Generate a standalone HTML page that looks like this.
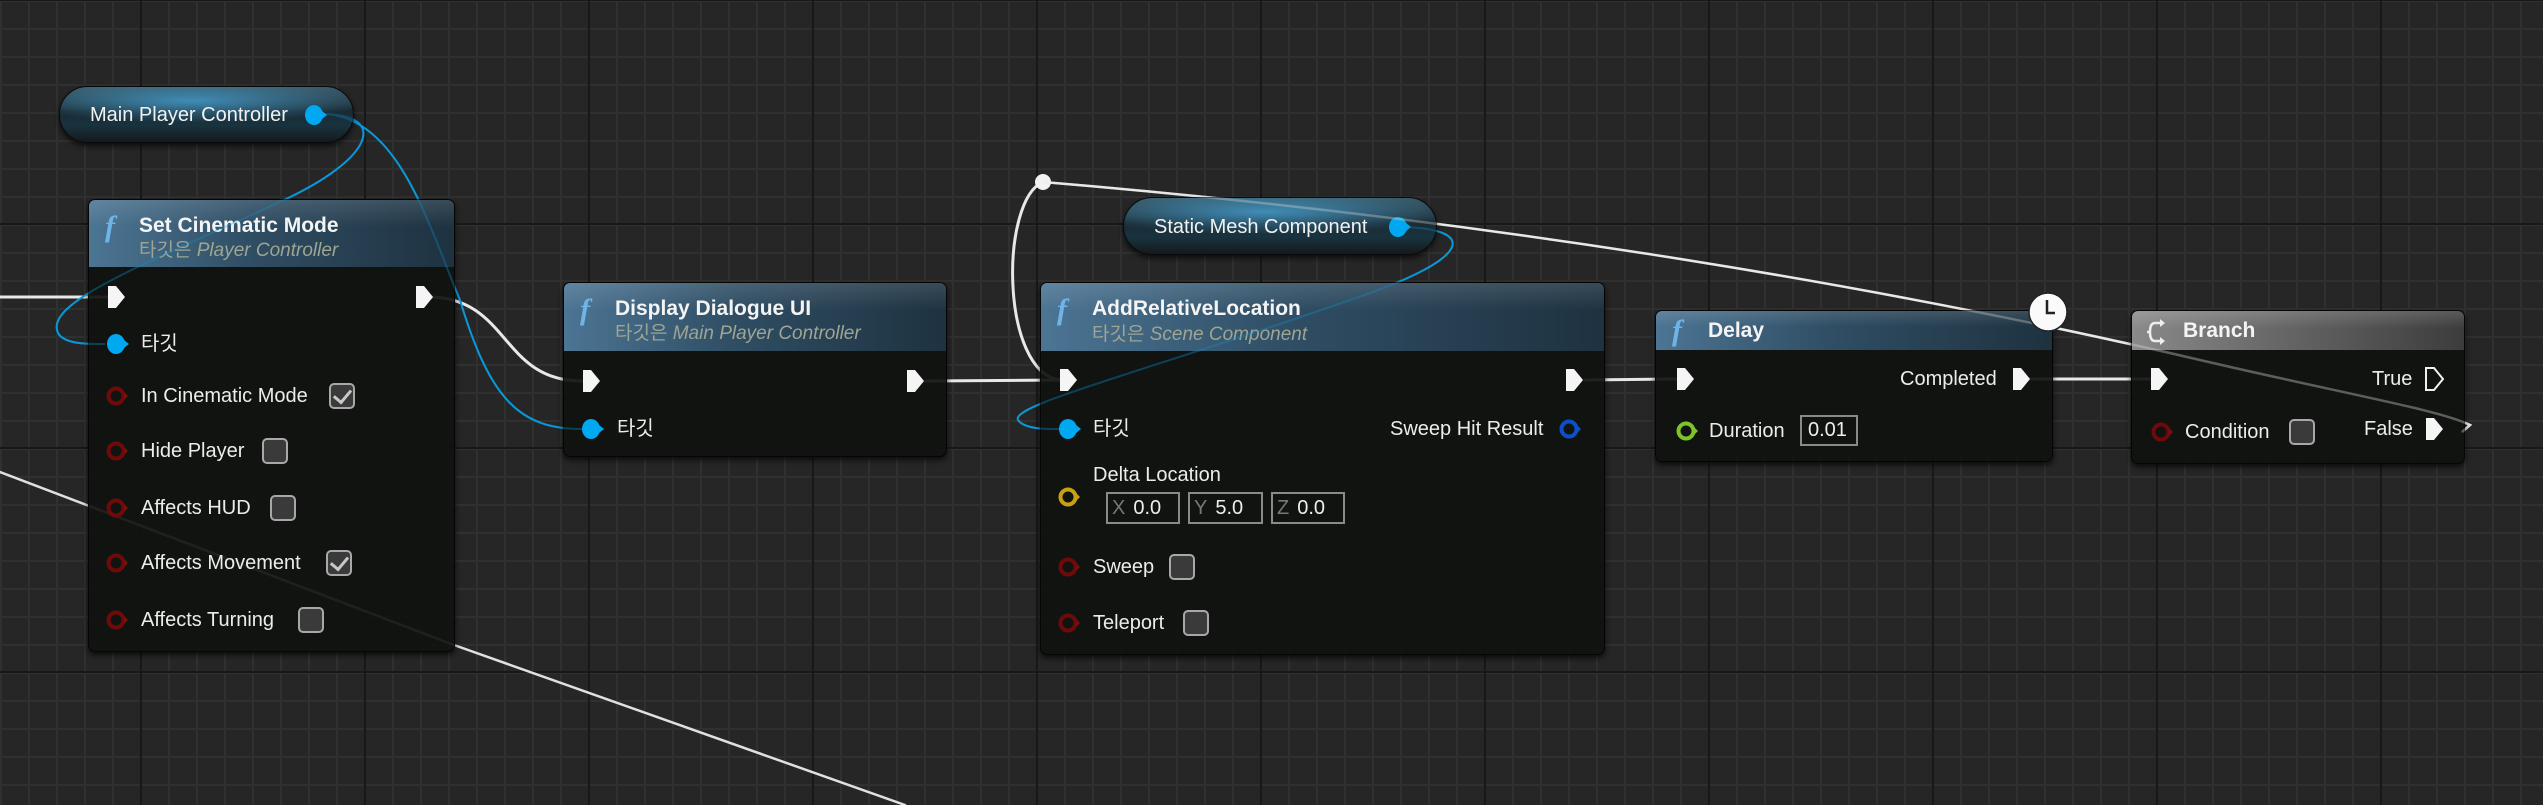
<!DOCTYPE html>
<html><head><meta charset="utf-8"><style>
*{margin:0;padding:0;box-sizing:border-box}
body{width:2543px;height:805px;overflow:hidden;position:relative;font-family:"Liberation Sans","Noto Sans CJK KR",sans-serif;color:#e8e8e8;
background-color:#262626;
background-image:
linear-gradient(90deg,#181818 2px,transparent 2px),
linear-gradient(180deg,#181818 2px,transparent 2px),
linear-gradient(90deg,#303030 2px,transparent 2px),
linear-gradient(180deg,#303030 2px,transparent 2px);
background-size:224px 224px,224px 224px,28px 28px,28px 28px;
background-position:140px 0,0 -1px,0 0,0 0;}
.a{position:absolute}
.node{position:absolute;background:rgba(16,18,16,0.93);border:1px solid #050505;border-radius:7px;box-shadow:0 3px 6px rgba(0,0,0,.7);overflow:hidden}
.hdr{position:absolute;left:0;top:0;right:0;background:linear-gradient(180deg,rgba(255,255,255,.12),rgba(0,0,0,0) 40%),linear-gradient(90deg,#4c7594 0%,#2f4d63 45%,#1e3240 100%)}
.hdr.grey{background:linear-gradient(180deg,rgba(255,255,255,.15),rgba(0,0,0,0) 45%),linear-gradient(90deg,#8a8a8a 0%,#6a6a6a 40%,#3c3c3c 100%)}
.t{position:absolute;font-weight:bold;font-size:21px;color:#f4f4f4;white-space:nowrap;line-height:24px}
.st{position:absolute;font-size:19px;color:#9ea592;white-space:nowrap;line-height:22px}
.st i{font-style:italic}
.f{position:absolute;font-family:"Liberation Serif",serif;font-style:italic;font-weight:bold;font-size:30px;color:#6fb4e8;line-height:30px}
.l{position:absolute;font-size:20px;color:#ececec;white-space:nowrap;line-height:22px}
.cb{position:absolute;width:26px;height:26px;border:2px solid #a8a8a8;border-radius:5px;background:#3a3a3a}
.cb.on::after{content:"";position:absolute;left:6px;top:1px;width:8px;height:14px;border:solid #c8c8c8;border-width:0 3px 3px 0;transform:rotate(40deg)}
.box{position:absolute;border:2px solid #8a8a8a;height:32px;font-size:20px;color:#eee;line-height:28px;white-space:nowrap}
.box span{color:#777;margin:0 8px 0 4px}
.pill{position:absolute;border-radius:30px;border:1px solid #0a0a0a;background:radial-gradient(ellipse 60% 40% at 45% 25%,rgba(70,160,210,.8),rgba(40,90,120,0) 100%),linear-gradient(180deg,#3a5966 0%,#1a2a32 45%,#18333f 70%,#15191b 100%);box-shadow:0 3px 6px rgba(0,0,0,.7);font-size:20px;color:#f2f2f2;white-space:nowrap}
</style></head><body>

<svg class="a" style="left:0;top:0" width="2543" height="805">
<g fill="none" stroke-linecap="round">
<path d="M0,297 L108,297" stroke="#e8e8e8" stroke-width="3"/>
<path d="M428,297 C510,297 500,381 582,381" stroke="#e8e8e8" stroke-width="3"/>
<path d="M926,381 L1060,380" stroke="#e8e8e8" stroke-width="3"/>
<path d="M1585,380 L1676,379" stroke="#e8e8e8" stroke-width="3"/>
<path d="M2030,379 L2150,379" stroke="#e8e8e8" stroke-width="3"/>
<path d="M0,472 L454,645 L905,805" stroke="#e0e0e0" stroke-width="2.5"/>
<path d="M1043,182 C1000,200 1000,372 1060,380" stroke="#e8e8e8" stroke-width="3"/>
<path id="kn" d="M1043,182 C1500,220 1900,290 2200,360 C2350,395 2440,410 2470,425 L2462,432" stroke="#e8e8e8" stroke-width="2.5"/>
<path id="b1" d="M325,114 C390,116 370,160 284,200 C150,262 50,300 57,330 C60,345 90,344 105,344" stroke="#0a98d8" stroke-width="2"/>
<path id="b2" d="M325,114 C400,118 430,230 460,300 C490,400 520,429 582,429" stroke="#0a98d8" stroke-width="2"/>
<path id="b3" d="M1405,227 C1480,230 1470,260 1350,300 C1150,370 1010,405 1018,420 C1025,430 1050,429 1060,429" stroke="#0a98d8" stroke-width="2"/>
</g>
<circle cx="1043" cy="182" r="8" fill="#f2f2f2"/>
</svg>

<!-- Main Player Controller pill -->
<div class="pill" style="left:59px;top:86px;width:295px;height:57px"><div class="a" style="left:30px;top:17px">Main Player Controller</div></div>
<svg class="a" style="left:304px;top:104px" width="24" height="22"><ellipse cx="10" cy="11" rx="9" ry="10" fill="#00a8f2"/><path d="M18,7 l5,4 l-5,4z" fill="#00a8f2"/></svg>

<!-- Static Mesh pill -->
<div class="pill" style="left:1123px;top:197px;width:314px;height:58px"><div class="a" style="left:30px;top:18px">Static Mesh Component</div></div>
<svg class="a" style="left:1388px;top:216px" width="24" height="22"><ellipse cx="10" cy="11" rx="9" ry="10" fill="#00a8f2"/><path d="M18,7 l5,4 l-5,4z" fill="#00a8f2"/></svg>

<!-- Set Cinematic Mode -->
<div class="node" style="left:88px;top:199px;width:367px;height:453px">
<div class="hdr" style="height:67px"></div>
<div class="f" style="left:16px;top:12px">f</div>
<div class="t" style="left:50px;top:14px">Set Cinematic Mode</div>
<div class="st" style="left:50px;top:40px">타깃은 <i>Player Controller</i></div>
</div>

<!-- Display Dialogue UI -->
<div class="node" style="left:563px;top:282px;width:384px;height:175px">
<div class="hdr" style="height:68px"></div>
<div class="f" style="left:16px;top:12px">f</div>
<div class="t" style="left:51px;top:14px">Display Dialogue UI</div>
<div class="st" style="left:51px;top:40px">타깃은 <i>Main Player Controller</i></div>
</div>

<!-- AddRelativeLocation -->
<div class="node" style="left:1040px;top:282px;width:565px;height:373px">
<div class="hdr" style="height:68px"></div>
<div class="f" style="left:16px;top:12px">f</div>
<div class="t" style="left:51px;top:14px">AddRelativeLocation</div>
<div class="st" style="left:51px;top:41px">타깃은 <i>Scene Component</i></div>
</div>

<!-- Delay -->
<div class="node" style="left:1655px;top:310px;width:398px;height:152px">
<div class="hdr" style="height:39px"></div>
<div class="f" style="left:16px;top:5px">f</div>
<div class="t" style="left:52px;top:8px">Delay</div>
</div>

<!-- Branch -->
<div class="node" style="left:2131px;top:310px;width:334px;height:154px">
<div class="hdr grey" style="height:39px"></div>
<div class="t" style="left:51px;top:8px">Branch</div>
<svg class="a" style="left:14px;top:8px" width="26" height="26"><path d="M15,4 L9,4 Q4,4 4,13 Q4,22 9,22 L15,22 M4,13 L1,13" stroke="#eee" stroke-width="2.5" fill="none"/><path d="M14,0 l5,4 l-5,4z M14,18 l5,4 l-5,4z" fill="#eee"/></svg>
</div>

<!-- faint wires over nodes -->
<svg class="a" style="left:0;top:0" width="2543" height="805">
<g fill="none" opacity="0.3">
<use href="#b1"/><use href="#b2"/><use href="#b3"/><use href="#kn"/>
</g>
</svg>

<!-- clock -->
<svg class="a" style="left:2027px;top:291px" width="42" height="42"><circle cx="21" cy="21" r="19" fill="#fafafa" stroke="#222" stroke-width="1.5"/><path d="M20,9 L20,22 L28,22" stroke="#222" stroke-width="2.5" fill="none"/></svg>

<!-- pins -->
<svg class="a" style="left:0;top:0;pointer-events:none" width="2543" height="805">
<defs>
<path id="ex" d="M0,-11 h8 l9,11 l-9,11 h-8 z"/>
<g id="bp"><ellipse cx="9" cy="0" rx="9" ry="10" fill="#00a8f2"/><path d="M17,-4 l5,4 l-5,4z" fill="#00a8f2"/></g>
<g id="rp"><circle cx="9" cy="0" r="7.5" fill="none" stroke="#6e0a0a" stroke-width="4"/><path d="M17,-4 l4,4 l-4,4z" fill="#7e0c0c"/></g>
</defs>
<g fill="#f5f5f5">
<use href="#ex" x="108" y="297"/><use href="#ex" x="416" y="297"/>
<use href="#ex" x="583" y="381"/><use href="#ex" x="907" y="381"/>
<use href="#ex" x="1060" y="380"/><use href="#ex" x="1566" y="380"/>
<use href="#ex" x="1677" y="379"/><use href="#ex" x="2013" y="379"/>
<use href="#ex" x="2151" y="379"/><use href="#ex" x="2426" y="429"/>
</g>
<path d="M2426,368 h8 l9,11 l-9,11 h-8 z" fill="none" stroke="#f0f0f0" stroke-width="2"/>
<use href="#bp" x="107" y="344"/><use href="#bp" x="582" y="429"/><use href="#bp" x="1059" y="429"/>
<g><circle cx="1569" cy="429" r="7.5" fill="none" stroke="#0a50c8" stroke-width="4"/><path d="M1577,425 l4,4 l-4,4z" fill="#0a50c8"/></g>
<use href="#rp" x="107" y="396"/><use href="#rp" x="107" y="451"/><use href="#rp" x="107" y="508"/><use href="#rp" x="107" y="563"/><use href="#rp" x="107" y="620"/>
<use href="#rp" x="1059" y="567"/><use href="#rp" x="1059" y="623"/><use href="#rp" x="2152" y="432"/>
<g><circle cx="1068" cy="497" r="7.5" fill="none" stroke="#c9a010" stroke-width="4"/><path d="M1076,493 l4,4 l-4,4z" fill="#c9a010"/></g>
<g><circle cx="1686" cy="431" r="7.5" fill="none" stroke="#7dc42a" stroke-width="4"/><path d="M1694,427 l4,4 l-4,4z" fill="#7dc42a"/></g>
</svg>

<!-- labels -->
<div class="l" style="left:141px;top:333px">타깃</div>
<div class="l" style="left:141px;top:385px">In Cinematic Mode</div><div class="cb on" style="left:329px;top:383px"></div>
<div class="l" style="left:141px;top:440px">Hide Player</div><div class="cb" style="left:262px;top:438px"></div>
<div class="l" style="left:141px;top:497px">Affects HUD</div><div class="cb" style="left:270px;top:495px"></div>
<div class="l" style="left:141px;top:552px">Affects Movement</div><div class="cb on" style="left:326px;top:550px"></div>
<div class="l" style="left:141px;top:609px">Affects Turning</div><div class="cb" style="left:298px;top:607px"></div>

<div class="l" style="left:617px;top:418px">타깃</div>

<div class="l" style="left:1093px;top:418px">타깃</div>
<div class="l" style="left:1390px;top:418px">Sweep Hit Result</div>
<div class="l" style="left:1093px;top:464px">Delta Location</div>
<div class="box" style="left:1106px;top:492px;width:74px"><span>X</span>0.0</div>
<div class="box" style="left:1188px;top:492px;width:75px"><span>Y</span>5.0</div>
<div class="box" style="left:1271px;top:492px;width:74px"><span>Z</span>0.0</div>
<div class="l" style="left:1093px;top:556px">Sweep</div><div class="cb" style="left:1169px;top:554px"></div>
<div class="l" style="left:1093px;top:612px">Teleport</div><div class="cb" style="left:1183px;top:610px"></div>

<div class="l" style="left:1900px;top:368px">Completed</div>
<div class="l" style="left:1709px;top:420px">Duration</div>
<div class="box" style="left:1800px;top:415px;width:58px;height:31px;padding-left:6px;line-height:27px">0.01</div>

<div class="l" style="left:2372px;top:368px">True</div>
<div class="l" style="left:2185px;top:421px">Condition</div><div class="cb" style="left:2289px;top:419px"></div>
<div class="l" style="left:2364px;top:418px">False</div>
</body></html>
